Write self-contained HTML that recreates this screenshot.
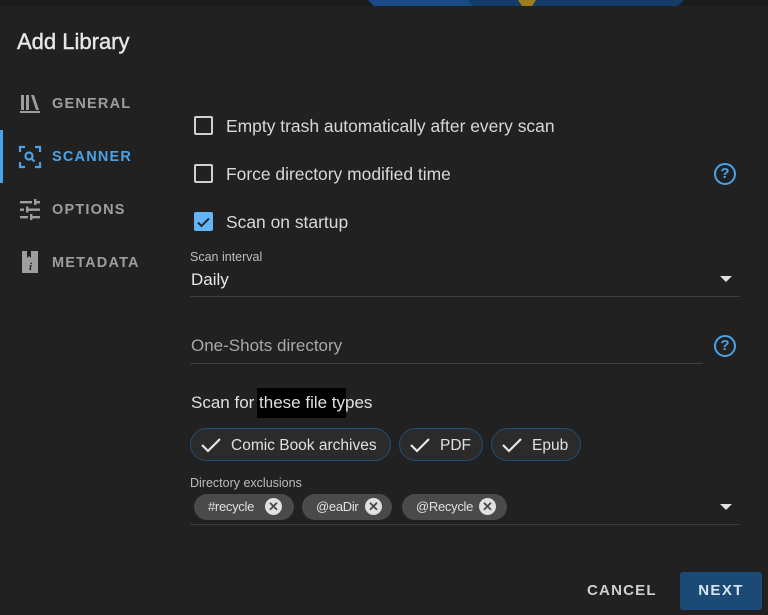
<!DOCTYPE html>
<html><head><style>
body{margin:0;width:768px;height:615px;background:#212121;position:relative;overflow:hidden;font-family:"Liberation Sans",sans-serif;color:#e0e0e0}
.top{position:absolute;left:0;top:0;width:768px;height:6px;background:#1b1b1b}
.a{position:absolute}
.nav{position:absolute;left:52px;font-size:14.5px;font-weight:bold;letter-spacing:1.2px;color:#9e9e9e}
.cb{position:absolute;left:194px;width:15px;height:15px;border:2px solid #d0d0d0;border-radius:2px}
.lbl{position:absolute;left:226px;font-size:17.45px;color:#d8d8d8}
.chip{position:absolute;top:428px;height:33px;border:1px solid #1f4f78;border-radius:17px;background:#2b2b2b;font-size:15.5px;color:#e0e0e0;line-height:33px;box-sizing:border-box}
.chip svg{position:absolute;left:9px;top:7px}
.g{position:absolute;top:494px;height:26px;border-radius:13px;background:#4a4a4a;font-size:13px;letter-spacing:-0.3px;color:#e0e0e0;line-height:26px;padding-left:14px;box-sizing:border-box}
.x{position:absolute;top:4px;width:17px;height:17px;border-radius:50%;background:#e0e0e0;color:#4a4a4a;font-size:13px;line-height:17px;text-align:center;font-weight:bold;letter-spacing:0}
.help{position:absolute;left:714px;width:18px;height:18px;border:2px solid #4aa3e8;border-radius:50%;color:#4aa3e8;font-size:15px;font-weight:bold;text-align:center;line-height:18px}
</style></head><body>
<div class="top"></div>
<svg class="a" style="left:368px;top:0" width="316" height="6"><polygon points="0,0 316,0 310,6 6,6" fill="#153b6b"/><polygon points="0,0 100,0 105,6 6,6" fill="#1a4a85"/><polygon points="150,0 168,0 164,6 154,6" fill="#a07d1c"/></svg>
<div class="a" style="left:17px;top:29px;font-size:22px;color:#e8e8e8;-webkit-text-stroke:0.4px #e8e8e8">Add Library</div>

<svg class="a" style="left:20px;top:94px" width="20" height="20"><rect x="1" y="1" width="3" height="15" fill="#9e9e9e"/><rect x="6" y="1" width="3" height="15" fill="#9e9e9e"/><polygon points="11,1 14,1 19,16 16,16" fill="#9e9e9e"/><rect x="0" y="17" width="20" height="2" fill="#9e9e9e"/></svg>
<div class="nav" style="top:96px">GENERAL</div>
<div class="a" style="left:0;top:130px;width:3px;height:53px;background:#4aa3e8"></div>
<svg class="a" style="left:18px;top:145px" width="24" height="24" fill="none" stroke="#4aa3e8" stroke-width="2.2"><path d="M2 7V2h5M17 2h5v5M22 17v5h-5M7 22H2v-5"/><circle cx="11" cy="11" r="3.5"/><path d="M13.5 13.5l3 3"/></svg>
<div class="nav" style="top:149px;color:#4aa3e8">SCANNER</div>
<svg class="a" style="left:19px;top:199px" width="22" height="22" fill="#9e9e9e"><rect x="1" y="2" width="12" height="2.4"/><rect x="15" y="0" width="2.4" height="6"/><rect x="17" y="2" width="4" height="2.4"/><rect x="1" y="9.5" width="4" height="2.4"/><rect x="7" y="7.5" width="2.4" height="6"/><rect x="9" y="9.5" width="12" height="2.4"/><rect x="1" y="17" width="8" height="2.4"/><rect x="11" y="15" width="2.4" height="6"/><rect x="13" y="17" width="8" height="2.4"/></svg>
<div class="nav" style="top:202px">OPTIONS</div>
<svg class="a" style="left:20px;top:250px" width="20" height="24"><path d="M2 1h16v22H2z" fill="#9e9e9e"/><path d="M7 1v7l2-2 2 2V1z" fill="#212121"/><text x="9" y="20" font-size="11" font-style="italic" font-weight="bold" fill="#212121" font-family="Liberation Serif">i</text></svg>
<div class="nav" style="top:255px">METADATA</div>

<div class="cb" style="top:116px"></div>
<div class="lbl" style="top:116px">Empty trash automatically after every scan</div>
<div class="cb" style="top:164px"></div>
<div class="lbl" style="top:164px">Force directory modified time</div>
<div class="help" style="top:163px">?</div>
<div class="cb" style="top:212px;background:#64b5f6;border-color:#64b5f6"></div>
<svg class="a" style="left:196px;top:215px" width="15" height="15"><path d="M2 7.5l3.5 3.5L13 3.5" stroke="#1e2a35" stroke-width="2" fill="none"/></svg>
<div class="lbl" style="top:212px">Scan on startup</div>

<div class="a" style="left:190px;top:250px;font-size:12.5px;color:#bdbdbd">Scan interval</div>
<div class="a" style="left:191px;top:270px;font-size:17px;color:#e8e8e8">Daily</div>
<svg class="a" style="left:720px;top:276px" width="12" height="7"><path d="M0 0h12L6 6z" fill="#e0e0e0"/></svg>
<div class="a" style="left:190px;top:296px;width:550px;height:1px;background:#3e3e3e"></div>

<div class="a" style="left:191px;top:336px;font-size:17px;color:#a8a8a8">One-Shots directory</div>
<div class="a" style="left:190px;top:363px;width:513px;height:1px;background:#3e3e3e"></div>
<div class="help" style="top:335px">?</div>

<div class="a" style="left:257px;top:388px;width:89px;height:30px;background:#000"></div>
<div class="a" style="left:191px;top:393px;font-size:17px;color:#e0e0e0">Scan for these file types</div>

<div class="chip" style="left:190px;width:201px;padding-left:40px"><svg width="22" height="18"><path d="M2 9l6 6L20 3" stroke="#e8e8e8" stroke-width="2.2" fill="none"/></svg>Comic Book archives</div>
<div class="chip" style="left:399px;width:84px;padding-left:40px"><svg width="22" height="18"><path d="M2 9l6 6L20 3" stroke="#e8e8e8" stroke-width="2.2" fill="none"/></svg>PDF</div>
<div class="chip" style="left:491px;width:90px;padding-left:40px"><svg width="22" height="18"><path d="M2 9l6 6L20 3" stroke="#e8e8e8" stroke-width="2.2" fill="none"/></svg>Epub</div>

<div class="a" style="left:190px;top:476px;font-size:12.5px;color:#bdbdbd">Directory exclusions</div>
<div class="g" style="left:194px;width:100px">#recycle<span class="x" style="left:71px">✕</span></div>
<div class="g" style="left:302px;width:90px">@eaDir<span class="x" style="left:63px">✕</span></div>
<div class="g" style="left:402px;width:105px">@Recycle<span class="x" style="left:77px">✕</span></div>
<svg class="a" style="left:720px;top:504px" width="12" height="7"><path d="M0 0h12L6 6z" fill="#e0e0e0"/></svg>
<div class="a" style="left:190px;top:524px;width:550px;height:1px;background:#3a3a3a"></div>

<div class="a" style="left:587px;top:582px;font-size:15px;font-weight:bold;letter-spacing:1.2px;color:#d0d0d0">CANCEL</div>
<div class="a" style="left:680px;top:572px;width:82px;height:38px;background:#1a4a75;border-radius:3px;color:#d8e4ee;font-size:15px;font-weight:bold;letter-spacing:1.4px;text-align:center;line-height:38px">NEXT</div>
</body></html>
